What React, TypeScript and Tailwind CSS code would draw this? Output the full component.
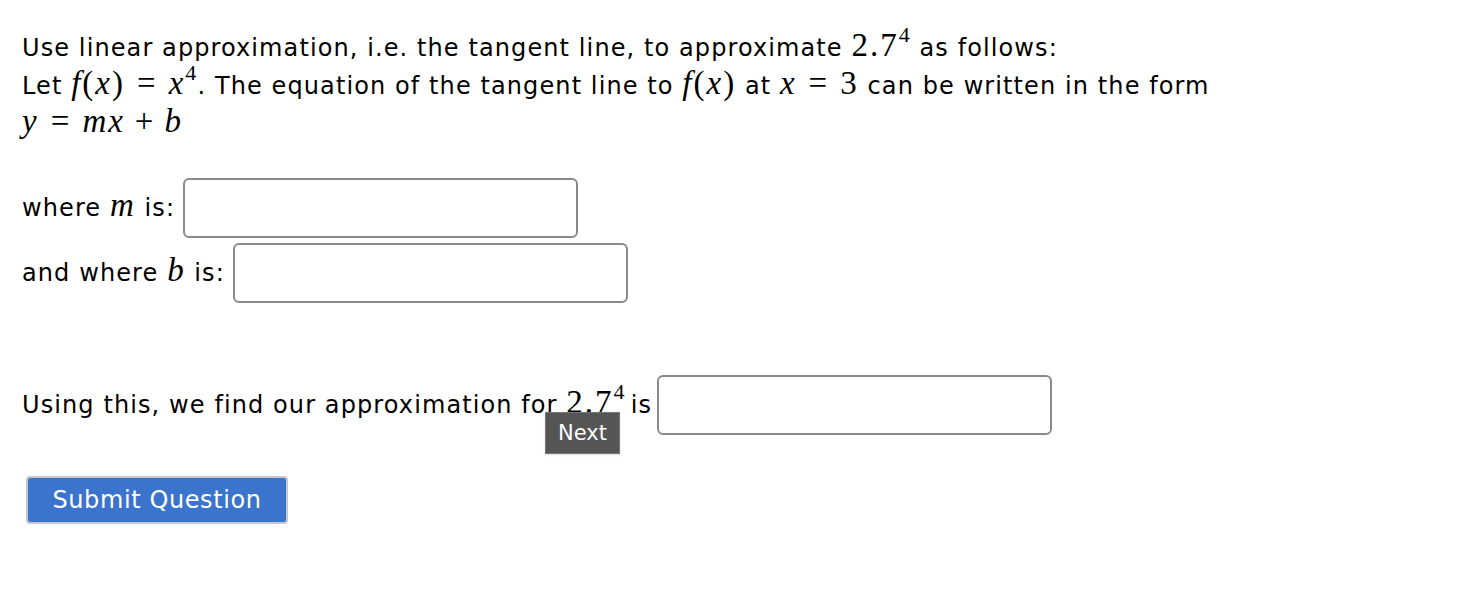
import React from "react";

const mathFont = { fontFamily: '"Liberation Serif", "DejaVu Serif", serif' };

function M({ children, italic = true }: { children: React.ReactNode; italic?: boolean }) {
  return (
    <span
      className={`${italic ? "italic" : "not-italic"} text-[33px] leading-none tracking-[2px]`}
      style={mathFont}
    >
      {children}
    </span>
  );
}

function Sup({ children }: { children: React.ReactNode }) {
  return (
    <sup className="text-[22px] leading-none not-italic relative -top-[14px]" style={mathFont}>
      {children}
    </sup>
  );
}

function Eq() {
  return (
    <span className="mx-[12px] text-[33px] leading-none not-italic" style={mathFont}>
      =
    </span>
  );
}

function AnswerBox({ gap = "ml-[8px]" }: { gap?: string }) {
  return (
    <input
      type="text"
      className={`w-[395px] h-[60px] rounded-[6px] border-2 border-[#8a8a8a] bg-white shrink-0 ${gap}`}
    />
  );
}

export default function App() {
  return (
    <div
      className="min-h-screen bg-white text-black px-[22px] pt-[29px] text-[24px] leading-[38px] tracking-[1.1px]"
      style={{ fontFamily: '"DejaVu Sans", Verdana, sans-serif' }}
    >
      <p>
        Use linear approximation, i.e. the tangent line, to approximate{" "}
        <M italic={false}>2.7</M>
        <Sup>4</Sup> as follows:
      </p>
      <p>
        Let <M>f</M>
        <M italic={false}>(</M>
        <M>x</M>
        <M italic={false}>)</M>
        <Eq />
        <M>x</M>
        <Sup>4</Sup>. The equation of the tangent line to <M>f</M>
        <M italic={false}>(</M>
        <M>x</M>
        <M italic={false}>)</M> at <M>x</M>
        <Eq />
        <M italic={false}>3</M> can be written in the form
      </p>
      <p>
        <M>y</M>
        <Eq />
        <M>mx</M>
        <span className="mx-[10px] text-[33px] leading-none" style={mathFont}>
          +
        </span>
        <M>b</M>
      </p>

      <div className="mt-[35px] flex items-center h-[60px]">
        <span>
          where <M>m</M> is:
        </span>
        <AnswerBox />
      </div>
      <div className="mt-[5px] flex items-center h-[60px]">
        <span>
          and where <M>b</M> is:
        </span>
        <AnswerBox />
      </div>

      <div className="mt-[72px] flex items-center h-[60px]">
        <span className="relative">
          Using this, we find our approximation for <M italic={false}>2.7</M>
          <Sup>4</Sup>
          <span className="absolute left-[523px] top-[26px] bg-[#555555] text-white text-[21px] leading-[40px] px-[12px] tracking-normal border border-[#777] shadow">
            Next
          </span>
        </span>
        <span className="ml-[5px]">is</span>
        <AnswerBox gap="ml-[5px]" />
      </div>

      <button className="mt-[41px] ml-[4px] h-[48px] w-[262px] rounded-[4px] bg-[#3a74cc] border-2 border-[#c8c8c8] text-white text-[24px] tracking-[0.6px]">
        Submit Question
      </button>
    </div>
  );
}
